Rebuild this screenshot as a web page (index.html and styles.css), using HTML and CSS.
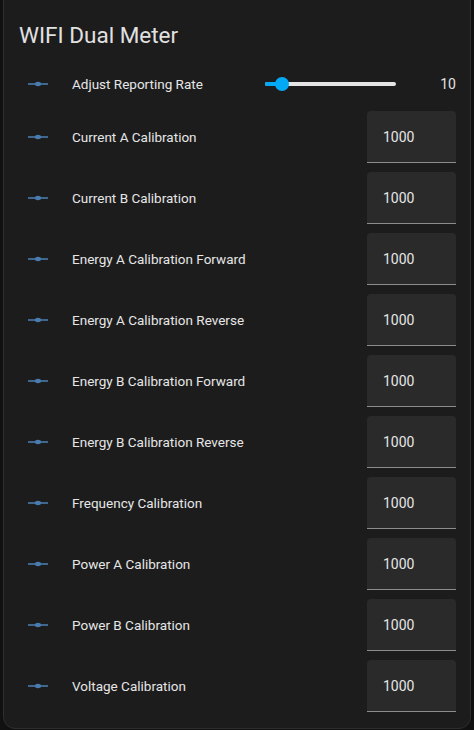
FILE: index.html
```html
<!DOCTYPE html>
<html>
<head>
<meta charset="utf-8">
<link rel="stylesheet" href="styles.css">
</head>
<body>
<div class="card">
  <div class="header">WIFI Dual Meter</div>
  <div class="rows">
    <div class="row slider-row">
      <span class="icon"><svg viewBox="0 0 24 24" width="24" height="24"><rect x="2" y="11.2" width="20" height="1.6" fill="currentColor"/><ellipse cx="12" cy="12" rx="3" ry="2.2" fill="currentColor"/></svg></span>
      <span class="label">Adjust Reporting Rate</span>
      <span class="slider"><span class="track"></span><span class="active"></span><span class="thumb"></span></span>
      <span class="value">10</span>
    </div>
    <div class="row">
      <span class="icon"><svg viewBox="0 0 24 24" width="24" height="24"><rect x="2" y="11.2" width="20" height="1.6" fill="currentColor"/><ellipse cx="12" cy="12" rx="3" ry="2.2" fill="currentColor"/></svg></span>
      <span class="label">Current A Calibration</span>
      <span class="field">1000</span>
    </div>
    <div class="row">
      <span class="icon"><svg viewBox="0 0 24 24" width="24" height="24"><rect x="2" y="11.2" width="20" height="1.6" fill="currentColor"/><ellipse cx="12" cy="12" rx="3" ry="2.2" fill="currentColor"/></svg></span>
      <span class="label">Current B Calibration</span>
      <span class="field">1000</span>
    </div>
    <div class="row">
      <span class="icon"><svg viewBox="0 0 24 24" width="24" height="24"><rect x="2" y="11.2" width="20" height="1.6" fill="currentColor"/><ellipse cx="12" cy="12" rx="3" ry="2.2" fill="currentColor"/></svg></span>
      <span class="label">Energy A Calibration Forward</span>
      <span class="field">1000</span>
    </div>
    <div class="row">
      <span class="icon"><svg viewBox="0 0 24 24" width="24" height="24"><rect x="2" y="11.2" width="20" height="1.6" fill="currentColor"/><ellipse cx="12" cy="12" rx="3" ry="2.2" fill="currentColor"/></svg></span>
      <span class="label">Energy A Calibration Reverse</span>
      <span class="field">1000</span>
    </div>
    <div class="row">
      <span class="icon"><svg viewBox="0 0 24 24" width="24" height="24"><rect x="2" y="11.2" width="20" height="1.6" fill="currentColor"/><ellipse cx="12" cy="12" rx="3" ry="2.2" fill="currentColor"/></svg></span>
      <span class="label">Energy B Calibration Forward</span>
      <span class="field">1000</span>
    </div>
    <div class="row">
      <span class="icon"><svg viewBox="0 0 24 24" width="24" height="24"><rect x="2" y="11.2" width="20" height="1.6" fill="currentColor"/><ellipse cx="12" cy="12" rx="3" ry="2.2" fill="currentColor"/></svg></span>
      <span class="label">Energy B Calibration Reverse</span>
      <span class="field">1000</span>
    </div>
    <div class="row">
      <span class="icon"><svg viewBox="0 0 24 24" width="24" height="24"><rect x="2" y="11.2" width="20" height="1.6" fill="currentColor"/><ellipse cx="12" cy="12" rx="3" ry="2.2" fill="currentColor"/></svg></span>
      <span class="label">Frequency Calibration</span>
      <span class="field">1000</span>
    </div>
    <div class="row">
      <span class="icon"><svg viewBox="0 0 24 24" width="24" height="24"><rect x="2" y="11.2" width="20" height="1.6" fill="currentColor"/><ellipse cx="12" cy="12" rx="3" ry="2.2" fill="currentColor"/></svg></span>
      <span class="label">Power A Calibration</span>
      <span class="field">1000</span>
    </div>
    <div class="row">
      <span class="icon"><svg viewBox="0 0 24 24" width="24" height="24"><rect x="2" y="11.2" width="20" height="1.6" fill="currentColor"/><ellipse cx="12" cy="12" rx="3" ry="2.2" fill="currentColor"/></svg></span>
      <span class="label">Power B Calibration</span>
      <span class="field">1000</span>
    </div>
    <div class="row">
      <span class="icon"><svg viewBox="0 0 24 24" width="24" height="24"><rect x="2" y="11.2" width="20" height="1.6" fill="currentColor"/><ellipse cx="12" cy="12" rx="3" ry="2.2" fill="currentColor"/></svg></span>
      <span class="label">Voltage Calibration</span>
      <span class="field">1000</span>
    </div>
  </div>
</div>
</body>
</html>
```

FILE: styles.css
```css
* { box-sizing: border-box; }
html, body { margin: 0; padding: 0; background: #111111; overflow: hidden; }
body { font-family: Roboto, "Liberation Sans", sans-serif; color: #e1e1e1; }

.card {
  margin: -12px 0 0 3px;
  width: 468px;
  background: #1c1c1c;
  border: 1px solid #2e2e2e;
  border-radius: 12px;
  padding: 0 14px 12px 22px;
}

.header {
  padding-top: 30px;
  margin-left: -7px;
  font-size: 22.5px;
  line-height: 32px;
  font-weight: 400;
  color: #e1e1e1;
}

.rows { margin-top: 11px; display: flex; flex-direction: column; }

.row {
  display: flex;
  align-items: center;
  height: 61px;
}
.slider-row { height: 44px; }

.icon {
  width: 24px;
  height: 24px;
  color: #4a7bad;
  flex: none;
  display: flex;
}
.label {
  flex: 1;
  margin-left: 22px;
  font-size: 13.5px;
  font-weight: 400;
  color: #e6e6e6;
}

.slider {
  position: relative;
  width: 131px;
  height: 16px;
  flex: none;
}
.track {
  position: absolute;
  left: 0; right: 0; top: 6px;
  height: 4px;
  border-radius: 2px;
  background: #e4e4e4;
}
.active {
  position: absolute;
  left: 0; width: 17px; top: 6px;
  height: 4px;
  border-radius: 2px;
  background: #03a9f4;
}
.thumb {
  position: absolute;
  left: 10px; top: 1px;
  width: 14px; height: 14px;
  border-radius: 50%;
  background: #03a9f4;
}
.value {
  width: 60px;
  text-align: right;
  font-size: 14px;
  font-weight: 400;
  flex: none;
}

.field {
  flex: none;
  width: 89px;
  height: 52px;
  background: #2a2a2a;
  border-bottom: 1px solid #8c8c8c;
  border-radius: 4px 4px 0 0;
  padding-left: 16px;
  padding-top: 2px;
  display: flex;
  align-items: center;
  font-size: 14px;
  font-weight: 400;
  color: #e6e6e6;
}
```
